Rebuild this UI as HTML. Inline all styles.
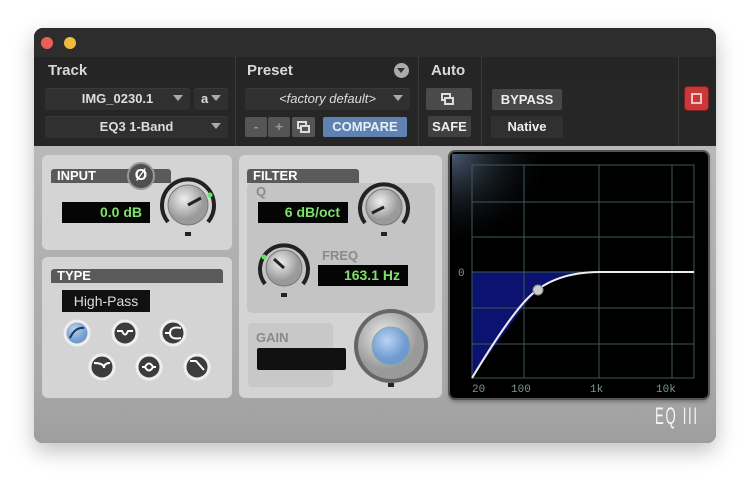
<!DOCTYPE html>
<html><head><style>
*{margin:0;padding:0;box-sizing:border-box}
body{width:750px;height:484px;background:#fff;position:relative;overflow:hidden;font-family:"Liberation Sans",Arial,sans-serif}
.a{position:absolute}
.win{left:34px;top:28px;width:682px;height:415px;border-radius:9px;background:#2c2c2c;overflow:hidden;box-shadow:0 8px 22px rgba(0,0,0,.25)}
.lbl{color:#d8d8d8;font-weight:bold;font-size:15px}
.dd{background:#303030;border-radius:3px;color:#ddd;font-weight:bold;font-size:13px;text-align:center;line-height:22px;box-shadow:inset 0 1px 0 #3a3a3a}
.tri{position:absolute;right:7px;top:7px;width:0;height:0;border-left:5px solid transparent;border-right:5px solid transparent;border-top:6px solid #aaa}
.btn{background:#474747;color:#eee;font-weight:bold;font-size:13px;text-align:center;border-radius:2px}
.panel{background:#d4d4d4;border-radius:6px}
.hdr{background:#5a5a5a;color:#fff;font-weight:bold;font-size:13px;padding-left:6px;line-height:14px;border-radius:3px 3px 0 0}
.ro{background:#050505;color:#7fe26a;font-weight:bold;font-size:14px;text-align:right;padding-right:8px;line-height:21px}
.gl{color:#8a8a8a;font-weight:bold;font-size:13px}
</style></head><body>
<div class="a win">
 <div class="a" style="left:0;top:0;width:682px;height:29px;background:#2d2d2d"></div>
 <div class="a" style="left:7px;top:9px;width:12px;height:12px;border-radius:50%;background:#ec5f57"></div>
 <div class="a" style="left:30px;top:9px;width:12px;height:12px;border-radius:50%;background:#f2bc3b"></div>
 <div class="a" style="left:0;top:29px;width:682px;height:24px;background:#252525"></div>
 <div class="a" style="left:0;top:53px;width:682px;height:65px;background:#262626"></div>
 <div class="a" style="left:201px;top:29px;width:1px;height:89px;background:#3a3a3a"></div>
 <div class="a" style="left:384px;top:29px;width:1px;height:89px;background:#3a3a3a"></div>
 <div class="a" style="left:447px;top:29px;width:1px;height:89px;background:#3a3a3a"></div>
 <div class="a" style="left:644px;top:29px;width:1px;height:89px;background:#3a3a3a"></div>
 <div class="a lbl" style="left:14px;top:34px">Track</div>
 <div class="a lbl" style="left:213px;top:34px">Preset</div>
 <div class="a" style="left:360px;top:35px;width:15px;height:15px;border-radius:50%;background:#aaa"><div style="position:absolute;left:3px;top:5px;border-left:4.5px solid transparent;border-right:4.5px solid transparent;border-top:5px solid #333"></div></div>
 <div class="a lbl" style="left:397px;top:34px">Auto</div>
 <div class="a dd" style="left:11px;top:60px;width:145px;height:22px">IMG_0230.1<span class="tri"></span></div>
 <div class="a dd" style="left:160px;top:60px;width:34px;height:22px;text-align:left;padding-left:7px">a<span class="tri"></span></div>
 <div class="a dd" style="left:11px;top:88px;width:183px;height:22px">EQ3 1-Band<span class="tri"></span></div>
 <div class="a dd" style="left:211px;top:60px;width:165px;height:22px;font-style:italic;font-weight:normal;font-size:13px">&lt;factory default&gt;<span class="tri"></span></div>
 <div class="a btn" style="left:211px;top:89px;width:22px;height:20px;background:#555;color:#999;line-height:20px">-</div>
 <div class="a btn" style="left:234px;top:89px;width:22px;height:20px;background:#555;color:#999;line-height:20px">+</div>
 <div class="a btn" style="left:258px;top:89px;width:23px;height:20px;background:#555"><div class="a" style="left:5px;top:4px;width:10px;height:8px;border:2px solid #ddd"></div><div class="a" style="left:8px;top:8px;width:10px;height:8px;border:2px solid #ddd;background:#555"></div></div>
 <div class="a btn" style="left:289px;top:89px;width:84px;height:20px;background:#5f82b0;color:#e8eef8;line-height:20px">COMPARE</div>
 <div class="a btn" style="left:392px;top:60px;width:46px;height:22px;background:#4a4a4a"><div class="a" style="left:15px;top:5px;width:10px;height:8px;border:2px solid #ddd"></div><div class="a" style="left:18px;top:9px;width:10px;height:8px;border:2px solid #ddd;background:#4a4a4a"></div></div>
 <div class="a btn" style="left:394px;top:88px;width:43px;height:21px;line-height:21px;background:#404040">SAFE</div>
 <div class="a btn" style="left:458px;top:61px;width:70px;height:21px;line-height:21px">BYPASS</div>
 <div class="a btn" style="left:457px;top:88px;width:72px;height:22px;line-height:22px;background:#303030">Native</div>
 <div class="a" style="left:651px;top:59px;width:23px;height:23px;border-radius:3px;background:#c9393a;box-shadow:0 0 0 1px #7a2020"><div class="a" style="left:6px;top:6px;width:11px;height:11px;border:2px solid #f3c0c0"></div></div>
 <!-- plugin body -->
 <div class="a" style="left:0;top:118px;width:682px;height:297px;background:linear-gradient(#b8b8b8,#a8a8a8 80%,#9e9e9e)"></div>
 <div class="a panel" style="left:8px;top:127px;width:190px;height:95px"></div>
 <div class="a panel" style="left:8px;top:229px;width:190px;height:141px"></div>
 <div class="a panel" style="left:205px;top:127px;width:203px;height:243px"></div>
 <div class="a" style="left:213px;top:155px;width:188px;height:130px;background:#c4c4c4;border-radius:6px"></div>
 <div class="a" style="left:214px;top:295px;width:85px;height:64px;background:#c8c8c8;border-radius:4px"></div>
 <div class="a hdr" style="left:17px;top:141px;width:120px">INPUT</div>
 <div class="a" style="left:93px;top:134px;width:28px;height:28px;border-radius:50%;background:#505050;border:2px solid #999;color:#fff;font-weight:bold;font-size:16px;text-align:center;line-height:23px">Ø</div>
 <div class="a ro" style="left:28px;top:174px;width:88px">0.0 dB</div>
 <div class="a hdr" style="left:17px;top:241px;width:172px">TYPE</div>
 <div class="a" style="left:28px;top:262px;width:88px;height:22px;background:#111;color:#ddd;font-size:14px;text-align:center;line-height:22px">High-Pass</div>
 <div class="a hdr" style="left:213px;top:141px;width:112px">FILTER</div>
 <div class="a gl" style="left:222px;top:156px">Q</div>
 <div class="a ro" style="left:224px;top:174px;width:90px">6 dB/oct</div>
 <div class="a gl" style="left:288px;top:220px">FREQ</div>
 <div class="a ro" style="left:284px;top:237px;width:90px">163.1 Hz</div>
 <div class="a gl" style="left:222px;top:302px">GAIN</div>
 <div class="a" style="left:223px;top:320px;width:89px;height:22px;background:#111;border-radius:2px"></div>
 <svg class="a" style="left:0;top:118px" width="420" height="297" viewBox="0 118 420 297">
  <defs><radialGradient id="k" cx="40%" cy="35%"><stop offset="0" stop-color="#eeeeee"/><stop offset="1" stop-color="#9a9a9a"/></radialGradient>
  <radialGradient id="b" cx="40%" cy="35%"><stop offset="0" stop-color="#b8d4f2"/><stop offset="1" stop-color="#6f9ad0"/></radialGradient></defs>
  <g transform="translate(154,177)"><path d="M-20 17 A26 26 0 1 1 20 17" fill="none" stroke="#222" stroke-width="4"/><circle r="20" fill="url(#k)" stroke="#777"/><line x1="0" y1="0" x2="13" y2="-7" stroke="#222" stroke-width="3"/><circle cx="22" cy="-10" r="2.5" fill="#5e5"/><rect x="-3" y="27" width="6" height="4" fill="#222"/></g>
  <g transform="translate(350,179)"><path d="M-19 16 A24 24 0 1 1 19 16" fill="none" stroke="#222" stroke-width="4"/><circle r="18" fill="url(#k)" stroke="#777"/><line x1="0" y1="0" x2="-12" y2="6" stroke="#222" stroke-width="3"/><rect x="-3" y="25" width="6" height="4" fill="#222"/></g>
  <g transform="translate(250,240)"><path d="M-19 16 A24 24 0 1 1 19 16" fill="none" stroke="#222" stroke-width="4"/><circle r="18" fill="url(#k)" stroke="#777"/><line x1="0" y1="0" x2="-10" y2="-9" stroke="#222" stroke-width="3"/><circle cx="-20" cy="-11" r="2.5" fill="#5e5"/><rect x="-3" y="25" width="6" height="4" fill="#222"/></g>
  <g transform="translate(357,318)"><circle r="37" fill="#666"/><circle r="33" fill="url(#k)"/><circle r="19" fill="url(#b)" stroke="#8aa" /><rect x="-3" y="37" width="6" height="4" fill="#222"/></g>
  <g stroke="#eee" stroke-width="3" fill="#3c3c3c">
   <circle cx="43" cy="305" r="12" fill="url(#b)"/><circle cx="91" cy="305" r="12"/><circle cx="139" cy="305" r="12"/>
   <circle cx="68" cy="339" r="12"/><circle cx="115" cy="339" r="12"/><circle cx="163" cy="339" r="12"/></g>
  <g stroke="#fff" stroke-width="2" fill="none"><path d="M36 310 Q41 299 50 300" stroke="#235"/><path d="M83 303 L88 303 Q91 310 94 303 L99 303"/><path d="M147 300 Q136 298 136 305 Q136 312 147 310 M136 305 L131 305"/><path d="M60 335 Q70 335 70 340 L70 340 Q70 335 76 335"/><path d="M108 339 L111 339 Q115 332 119 339 Q115 346 111 339 M119 339 L122 339"/><path d="M156 333 L162 333 L170 342"/></g>
 </svg>
 <!-- graph -->
 <div class="a" style="left:416px;top:124px;width:258px;height:246px;background:#000;border-radius:5px;box-shadow:0 0 0 2px #555,0 3px 5px rgba(0,0,0,.4)"></div>
 <svg class="a" style="left:416px;top:124px" width="258" height="246" viewBox="450 152 258 246">
  <defs><radialGradient id="gl" cx="0" cy="0" r="1"><stop offset="0" stop-color="#4a5a70"/><stop offset="0.4" stop-color="#000" stop-opacity="0"/></radialGradient></defs>
  <rect x="452" y="154" width="254" height="242" fill="url(#gl)"/>
  <path d="M472 272 L538 272 L538 290 Q520 310 472 378 Z" fill="#0c1270"/>
  <path d="M538 290 Q555 275 590 272 L538 272 Z" fill="#0c1270"/>
  <g stroke="#3d5a58" stroke-width="1" fill="none"><rect x="472" y="165" width="222" height="213"/>
   <path d="M524 165V378M599 165V378M672 165V378M472 202H694M472 237H694M472 272H694M472 308H694M472 344H694"/></g>
  <path d="M472 378 Q510 315 530 296 Q555 272 600 272 L694 272" stroke="#eee" stroke-width="2" fill="none"/>
  <circle cx="538" cy="290" r="5" fill="#ccc" stroke="#888"/>
  <g fill="#7c9a86" font-family="Liberation Mono,monospace" font-size="11"><text x="458" y="276">0</text><text x="472" y="392">20</text><text x="511" y="392">100</text><text x="590" y="392">1k</text><text x="656" y="392">10k</text></g>
 </svg>
 <div class="a" style="left:621px;top:375px;color:#f4f4f4;font-size:24px;white-space:nowrap;transform:scaleX(.55);transform-origin:left;letter-spacing:3px">EQ III</div>
</div>
</body></html>
